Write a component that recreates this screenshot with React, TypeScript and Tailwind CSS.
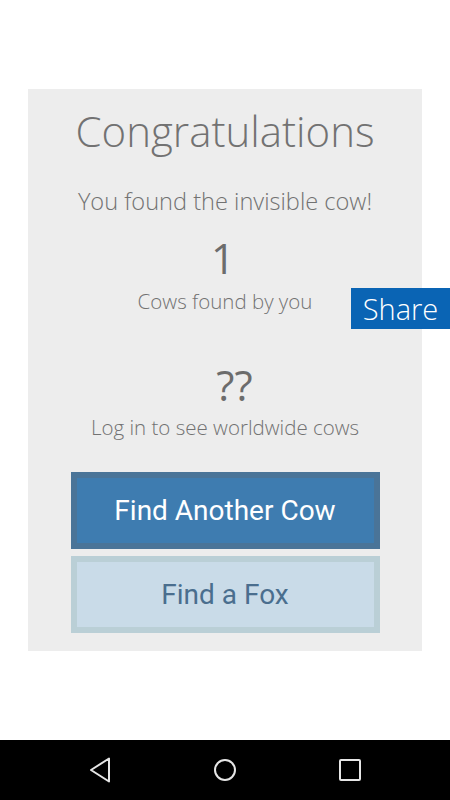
import React from "react";

export default function App() {
  const os = { fontFamily: '"Open Sans", sans-serif' };
  return (
    <div className="w-[450px] h-[800px] bg-white flex flex-col overflow-hidden relative">
      <div className="h-[740px] pt-[89px] pl-[28px]">
        <div
          className="w-[394px] h-[562px] bg-[#ededed] flex flex-col items-center text-[#727272] font-light"
          style={os}
        >
          <div className="mt-[17px] text-[42px] leading-[50px]">Congratulations</div>
          <div className="mt-[30px] text-[23.6px] leading-[30px]">You found the invisible cow!</div>
          <div className="mt-[17px] text-[42px] leading-[50px] font-normal text-[#6c6c6c] pr-[4px]">1</div>
          <div className="mt-[5px] text-[20.5px] leading-[26px]">Cows found by you</div>
          <div className="mt-[46px] text-[42px] leading-[50px] font-normal text-[#6c6c6c] pl-[19px]">??</div>
          <div className="mt-[4px] text-[20.5px] leading-[26px]">Log in to see worldwide cows</div>
          <button
            className="mt-[32px] w-[309px] h-[77px] border-[6px] border-[#4a7498] bg-[#3e7cb0] text-white text-[28px] font-normal flex items-center justify-center"
            style={{ fontFamily: "Roboto, sans-serif" }}
          >
            Find Another Cow
          </button>
          <button
            className="mt-[7px] w-[309px] h-[77px] border-[6px] border-[#bacfd6] bg-[#c9dbe8] text-[#4a6e8e] text-[28px] font-normal flex items-center justify-center"
            style={{ fontFamily: "Roboto, sans-serif" }}
          >
            Find a Fox
          </button>
        </div>
      </div>
      <div
        className="absolute left-[351px] top-[288px] w-[99px] h-[41px] bg-[#0a64b4] text-white text-[29px] font-light flex items-center justify-center"
        style={os}
      >
        Share
      </div>
      <div className="h-[60px] bg-black flex items-center justify-center">
        <div className="w-[125px] flex justify-center">
          <svg width="26" height="26" viewBox="0 0 26 26">
            <path d="M22 1.5 L22 24.5 L4 13 Z" fill="none" stroke="#e6e6e6" strokeWidth="2" strokeLinejoin="round" />
          </svg>
        </div>
        <div className="w-[125px] flex justify-center">
          <svg width="24" height="24" viewBox="0 0 24 24">
            <circle cx="12" cy="12" r="10" fill="none" stroke="#e6e6e6" strokeWidth="2" />
          </svg>
        </div>
        <div className="w-[125px] flex justify-center">
          <svg width="22" height="22" viewBox="0 0 22 22">
            <rect x="1" y="1" width="20" height="20" rx="1" fill="none" stroke="#e6e6e6" strokeWidth="2" />
          </svg>
        </div>
      </div>
    </div>
  );
}
